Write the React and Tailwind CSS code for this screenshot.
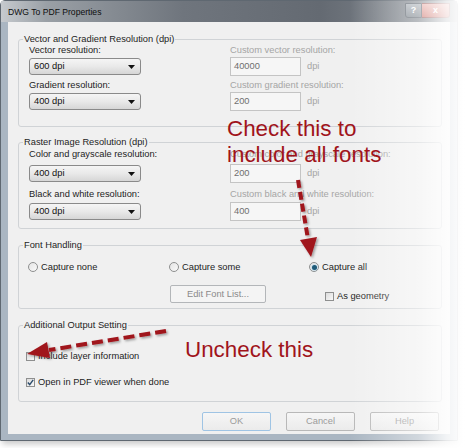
import React from 'react';

const RED = '#a0141b';

const Label = ({ children, disabled }) => (
  <div className={`leading-[11px] whitespace-nowrap ${disabled ? 'text-[#a5a5a5]' : 'text-[#1d1d1d]'}`}>
    {children}
  </div>
);

const Combo = ({ value }) => (
  <div className="h-[17px] w-[112px] flex items-center justify-between rounded-[3px] border border-[#8a8a8a] bg-linear-to-b from-[#f5f5f5] via-[#e9e9e9] to-[#d6d6d6] pl-[4px] pr-[5px] text-[#111]">
    <span className="leading-[11px]">{value}</span>
    <svg width="7" height="4" viewBox="0 0 7 4">
      <path d="M0 0h7L3.5 4z" fill="#111" />
    </svg>
  </div>
);

const TextBox = ({ value }) => (
  <div className="flex items-center">
    <div className="h-[19px] w-[71px] border border-[#c4c4c4] bg-[#f6f6f6] pl-[3px] flex items-center text-[#6f6f6f] leading-[11px]">
      {value}
    </div>
    <span className="ml-[6px] text-[#a5a5a5] leading-[11px]">dpi</span>
  </div>
);

const Field = ({ label, disabled, gap, className, children }) => (
  <div className={`flex flex-col ${className}`}>
    <Label disabled={disabled}>{label}</Label>
    <div className={`h-[19px] flex items-center ${gap}`}>{children}</div>
  </div>
);

const Group = ({ title, className, children }) => (
  <fieldset className={`border border-[#d0d3d6] rounded-[3px] px-[4px] ${className}`}>
    <legend className="px-[1px] leading-[11px] text-[#1d1d1d] whitespace-nowrap">{title}</legend>
    {children}
  </fieldset>
);

const Radio = ({ checked, label }) => (
  <div className="flex items-center h-[14px]">
    <div className="w-[10px] h-[10px] rounded-full border border-[#8e8f8f] bg-linear-to-br from-[#e4e4e4] to-[#fafafa] flex items-center justify-center">
      {checked && <div className="w-[5px] h-[5px] rounded-full bg-[#1f5a78] shadow-[0_0_2px_#6fb8e0]" />}
    </div>
    <span className="ml-[3px] leading-[11px] text-[#1d1d1d]">{label}</span>
  </div>
);

const Check = ({ checked, label }) => (
  <div className="flex items-center h-[14px]">
    <div className="w-[9px] h-[9px] border border-[#8e8f8f] bg-linear-to-br from-[#dcdcdc] to-[#f8f8f8] flex items-center justify-center">
      {checked && (
        <svg width="7" height="7" viewBox="0 0 7 7">
          <path d="M0.8 3.6L2.7 5.6L6.2 0.9" stroke="#2b4b6b" strokeWidth="1.4" fill="none" />
        </svg>
      )}
    </div>
    <span className="ml-[3px] leading-[11px] text-[#1d1d1d]">{label}</span>
  </div>
);

const Button = ({ children, focus }) => (
  <div
    className={`h-[19px] w-[69px] rounded-[2px] border flex items-center justify-center text-[#9b9b9b] leading-[11px] bg-linear-to-b from-[#f6f6f6] to-[#ebebeb] ${
      focus ? 'border-[#9fc4e4]' : 'border-[#b8b8b8]'
    }`}
  >
    {children}
  </div>
);

export default function App() {
  return (
    <div className="relative w-[474px] h-[448px] bg-white overflow-hidden text-[9.3px] font-['Liberation_Sans',Arial,sans-serif]">
      {/* window */}
      <div className="w-[458px] h-[441px] flex flex-col border border-[#5f6871] rounded-t-[5px] shadow-[2px_3px_6px_rgba(0,0,0,0.22)]">
        {/* title bar */}
        <div className="h-[21px] flex items-center justify-between pl-[7px] pr-[7px] bg-[linear-gradient(90deg,#c6cace_0%,#9aa0a6_10%,#6f757d_40%,#646a72_70%,#8c9299_100%)]">
          <span className="text-[8.6px] text-[#0e0e0e] leading-[10px]">DWG To PDF Properties</span>
          <div className="flex h-[15px] mt-[-3px]">
            <div className="w-[17px] h-full border border-[#59616a] rounded-bl-[3px] bg-linear-to-b from-[#a9b0b7] to-[#7c848c] flex items-center justify-center text-white text-[9px] font-bold leading-[9px]">
              ?
            </div>
            <div className="w-[28px] h-full border border-l-0 border-[#8c4a48] rounded-br-[3px] bg-linear-to-b from-[#e7a8a2] to-[#c96a62] flex items-center justify-center text-white text-[9px] font-bold leading-[9px]">
              x
            </div>
          </div>
        </div>
        {/* frame */}
        <div className="flex-1 flex bg-[#aab6c2] pl-[7px] pr-[7px] pb-[6px]">
          {/* client */}
          <div className="flex-1 flex flex-col bg-[#f0f0f0] pt-[12px] pl-[10px] pr-[8px]">
            <Group title="Vector and Gradient Resolution (dpi)" className="pb-[15px]">
              <div className="flex pl-[6px]">
                <div className="w-[201px] flex flex-col">
                  <Field label="Vector resolution:" gap="mt-[1px]">
                    <Combo value="600 dpi" />
                  </Field>
                  <Field label="Gradient resolution:" gap="mt-[1px]" className="mt-[4px]">
                    <Combo value="400 dpi" />
                  </Field>
                </div>
                <div className="flex flex-col">
                  <Field label="Custom vector resolution:" disabled gap="mt-[1px]">
                    <TextBox value="40000" />
                  </Field>
                  <Field label="Custom gradient resolution:" disabled gap="mt-[1px]" className="mt-[4px]">
                    <TextBox value="200" />
                  </Field>
                </div>
              </div>
            </Group>

            <Group title="Raster Image Resolution (dpi)" className="mt-[10px] pb-[7px]">
              <div className="flex pl-[6px] pt-[1px]">
                <div className="w-[201px] flex flex-col">
                  <Field label="Color and grayscale resolution:" gap="mt-[4px]">
                    <Combo value="400 dpi" />
                  </Field>
                  <Field label="Black and white resolution:" gap="mt-[2px]" className="mt-[6px]">
                    <Combo value="400 dpi" />
                  </Field>
                </div>
                <div className="flex flex-col">
                  <Field label="Custom color and grayscale resolution:" disabled gap="mt-[4px]">
                    <TextBox value="200" />
                  </Field>
                  <Field label="Custom black and white resolution:" disabled gap="mt-[2px]" className="mt-[6px]">
                    <TextBox value="400" />
                  </Field>
                </div>
              </div>
            </Group>

            <Group title="Font Handling" className="mt-[11px] pb-[5px]">
              <div className="grid grid-cols-[141px_140px_auto] pl-[5px] mt-[9px]">
                <Radio label="Capture none" />
                <Radio label="Capture some" />
                <Radio label="Capture all" checked />
                <div />
                <div className="mt-[11px] pl-[1px]">
                  <div className="h-[18px] w-[96px] rounded-[2px] border border-[#b3b6b9] bg-[#f4f4f4] flex items-center justify-center text-[#8a8a8a] leading-[11px]">
                    Edit Font List...
                  </div>
                </div>
                <div className="mt-[15px] pl-[16px]">
                  <Check label="As geometry" />
                </div>
              </div>
            </Group>

            <Group title="Additional Output Setting" className="mt-[11px] pb-[12px]">
              <div className="flex flex-col pl-[3px]">
                <div className="mt-[18px]">
                  <Check label="Include layer information" />
                </div>
                <div className="mt-[12px]">
                  <Check label="Open in PDF viewer when done" checked />
                </div>
              </div>
            </Group>

            <div className="mt-[10px] flex justify-end gap-[15px] pr-[3px]">
              <Button focus>OK</Button>
              <Button>Cancel</Button>
              <Button>Help</Button>
            </div>
          </div>
        </div>
      </div>

      {/* faded right edge of the screenshot */}
      <div className="absolute top-0 bottom-0 left-[350px] w-[124px] bg-[linear-gradient(90deg,rgba(255,255,255,0)_0%,rgba(255,255,255,0.45)_55%,rgba(255,255,255,0.85)_78%,rgba(255,255,255,0.95)_88%,#fff_100%)]" />

      {/* annotations */}
      <div className="absolute left-[227px] top-[116px] text-[22.4px] leading-[26px] whitespace-nowrap" style={{ color: RED }}>
        Check this to
        <br />
        include all fonts
      </div>
      <div className="absolute left-[185px] top-[337px] text-[22.4px] leading-[26px] whitespace-nowrap" style={{ color: RED }}>
        Uncheck this
      </div>
      <svg className="absolute inset-0 pointer-events-none" width="474" height="448" viewBox="0 0 474 448">
        <defs>
          <filter id="sh" x="-20%" y="-20%" width="140%" height="140%">
            <feDropShadow dx="1.5" dy="1.5" stdDeviation="1" floodColor="#000" floodOpacity="0.35" />
          </filter>
        </defs>
        <g filter="url(#sh)">
          <line x1="298" y1="180" x2="308" y2="239" stroke={RED} strokeWidth="4" strokeDasharray="8 4" />
          <polygon points="311,257 317,237 300,240" fill={RED} />
          <line x1="166" y1="331" x2="49" y2="350" stroke={RED} strokeWidth="4" strokeDasharray="11 5" />
          <polygon points="27,354 47,342 50,358" fill={RED} />
        </g>
      </svg>
    </div>
  );
}
